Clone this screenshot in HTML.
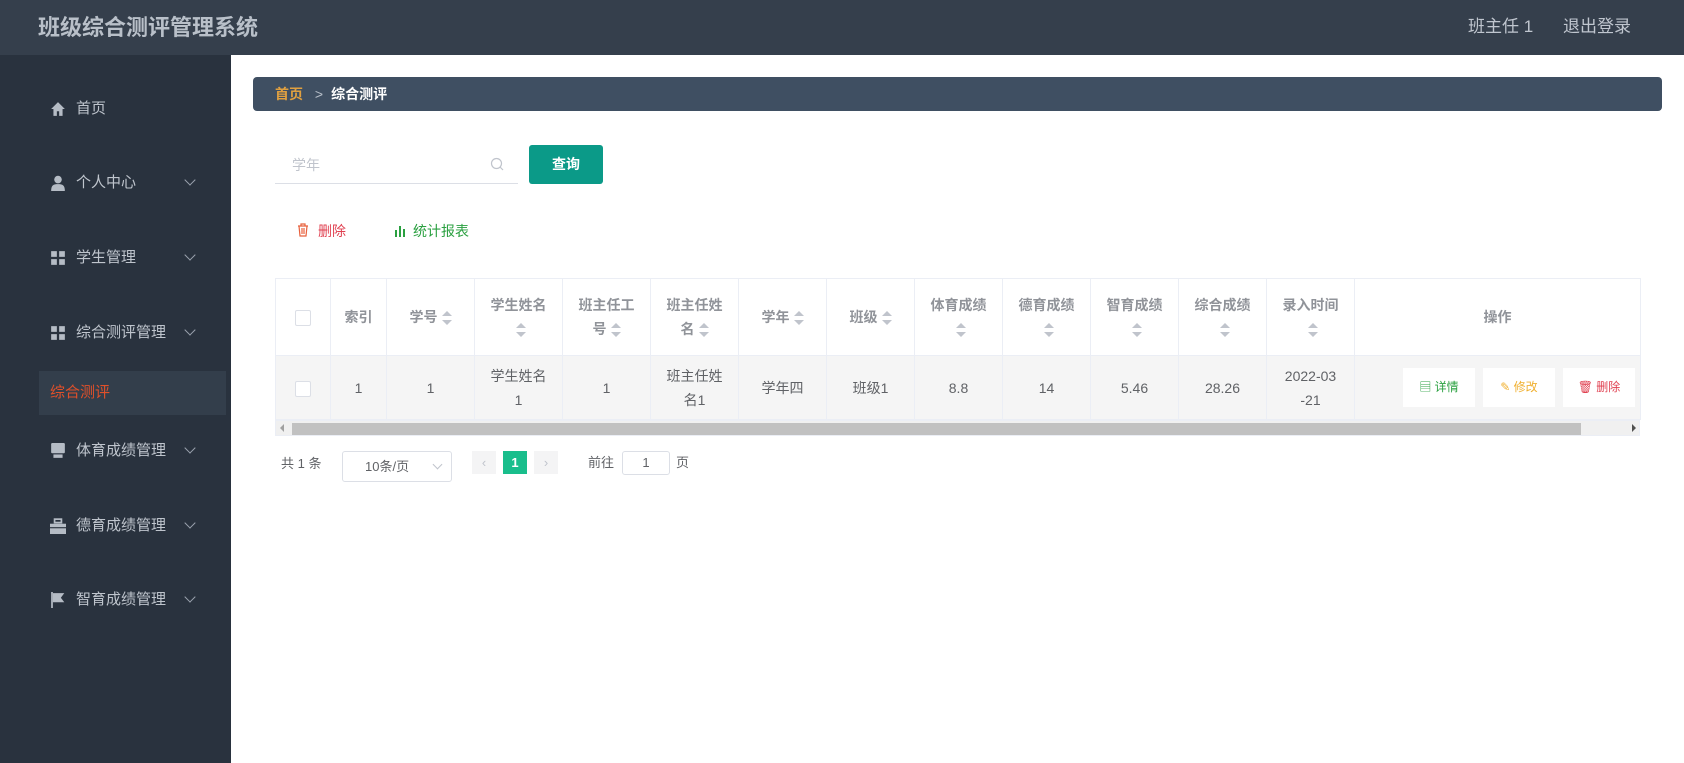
<!DOCTYPE html>
<html><head><meta charset="utf-8"><style>
*{box-sizing:border-box;margin:0;padding:0}
body{width:1684px;height:763px;overflow:hidden;background:#fff;font-family:"Liberation Sans","Noto Sans CJK SC",sans-serif;position:relative}
.a{position:absolute}
.hdr{left:0;top:0;width:1684px;height:55px;background:#353f4c}
.side{left:0;top:55px;width:231px;height:708px;background:#29323e}
.mi{position:absolute;left:0;width:231px;height:40px;color:#bfc5cd;font-size:15px;line-height:40px}
.mi .ic{position:absolute;left:50px;top:12px;width:16px;height:16px}
.mi .t{position:absolute;left:76px}
.mi .ch{position:absolute;left:186px;top:13px;width:8px;height:8px;border-right:1px solid #9aa2ad;border-bottom:1px solid #9aa2ad;transform:rotate(45deg)}
table{border-collapse:collapse;table-layout:fixed;position:absolute;left:275px;top:278px}
td,th{border:1px solid #ebeef5;text-align:center;font-size:14px;line-height:22px;padding:0 12px}
th{height:77px;color:#909399;font-weight:bold;line-height:24px}
td{height:64px;color:#606266;background:#f5f5f5;line-height:24px}
.s{display:inline-block;width:10px;height:14px;vertical-align:middle;position:relative;margin-left:4px}
.s:before{content:"";position:absolute;left:0;top:0;border:5px solid transparent;border-bottom-color:#c0c4cc;border-top:0}
.s:after{content:"";position:absolute;left:0;bottom:0;border:5px solid transparent;border-top-color:#c0c4cc;border-bottom:0}
.cb{display:inline-block;width:16px;height:16px;border:1px solid #dcdfe6;border-radius:2px;background:#fff;vertical-align:middle}
.ob{display:inline-block;width:72px;height:39px;background:#fff;line-height:39px;font-size:12px;margin-left:8px;text-align:center}
</style></head><body>
<div class="a hdr"></div>
<div class="a" style="left:38px;top:13px;font-size:22px;font-weight:bold;color:#b9c0c9;line-height:30px">班级综合测评管理系统</div>
<div class="a" style="left:1468px;top:15px;font-size:17px;color:#c0c6cf;line-height:24px">班主任 1</div>
<div class="a" style="left:1563px;top:15px;font-size:17px;color:#c0c6cf;line-height:24px">退出登录</div>
<div class="a side"></div>
<div class="mi" style="top:89px"><svg class="ic" viewBox="0 0 14 14"><path d="M7 1L1 7h2v6h3V9h2v4h3V7h2z" fill="#b5bcc5"/></svg><span class="t">首页</span></div>
<div class="mi" style="top:163px"><svg class="ic" viewBox="0 0 14 14"><circle cx="7" cy="4" r="3.3" fill="#b5bcc5"/><path d="M1 14c0-5 2-6 6-6s6 1 6 6z" fill="#b5bcc5"/></svg><span class="t">个人中心</span><i class="ch"></i></div>
<div class="mi" style="top:238px"><svg class="ic" viewBox="0 0 14 14" fill="#b5bcc5"><rect x="1" y="1" width="5" height="5"/><rect x="8" y="1" width="5" height="5"/><rect x="1" y="8" width="5" height="5"/><rect x="8" y="8" width="5" height="5"/></svg><span class="t">学生管理</span><i class="ch"></i></div>
<div class="mi" style="top:313px"><svg class="ic" viewBox="0 0 14 14" fill="#b5bcc5"><rect x="1" y="1" width="5" height="5"/><rect x="8" y="1" width="5" height="5"/><rect x="1" y="8" width="5" height="5"/><rect x="8" y="8" width="5" height="5"/></svg><span class="t">综合测评管理</span><i class="ch"></i></div>
<div class="a" style="left:39px;top:371px;width:187px;height:44px;background:#333e4b;color:#e0502a;font-size:15px;line-height:44px;padding-left:11px">综合测评</div>
<div class="mi" style="top:431px"><svg class="ic" viewBox="0 0 14 14" fill="#b5bcc5"><rect x="1" y="0" width="12" height="9" rx="1"/><rect x="3" y="10" width="8" height="3"/></svg><span class="t">体育成绩管理</span><i class="ch"></i></div>
<div class="mi" style="top:506px"><svg class="ic" viewBox="0 0 14 14" fill="#b5bcc5"><rect x="4" y="1" width="6" height="3" fill="none" stroke="#b5bcc5" stroke-width="1.5"/><rect x="0" y="5" width="14" height="3"/><rect x="0" y="9" width="14" height="5"/></svg><span class="t">德育成绩管理</span><i class="ch"></i></div>
<div class="mi" style="top:580px"><svg class="ic" viewBox="0 0 14 14" fill="#b5bcc5"><rect x="1" y="0" width="1.5" height="14"/><path d="M2.5 1h10l-3 4 3 4h-10z"/></svg><span class="t">智育成绩管理</span><i class="ch"></i></div>

<div class="a" style="left:253px;top:77px;width:1409px;height:34px;background:#3f4f62;border-radius:4px"></div>
<div class="a" style="left:275px;top:85px;font-size:14px;font-weight:bold;line-height:18px;color:#e0a040">首页 <span style="color:#b8c0ca;font-weight:normal;margin:0 8px">&gt;</span><span style="color:#fff">综合测评</span></div>

<div class="a" style="left:275px;top:145px;width:243px;height:39px;border-bottom:1px solid #dcdfe6"></div>
<div class="a" style="left:292px;top:155px;font-size:14px;color:#c0c4cc;line-height:20px">学年</div>
<svg class="a" style="left:490px;top:157px" width="15" height="15" viewBox="0 0 15 15"><circle cx="6.5" cy="6.5" r="5" fill="none" stroke="#c0c4cc" stroke-width="1.2"/><path d="M10 10l3 3" stroke="#c0c4cc" stroke-width="1.2"/></svg>
<div class="a" style="left:529px;top:145px;width:74px;height:39px;background:#0b9a88;border-radius:3px;color:#fff;font-size:14px;font-weight:bold;line-height:39px;text-align:center">查询</div>

<svg class="a" style="left:297px;top:223px" width="12" height="14" viewBox="0 0 12 14"><path d="M1 3h10M4 3V1h4v2M2 3l1 10h6l1-10M5 5v6M7 5v6" fill="none" stroke="#e8603c" stroke-width="1.2"/></svg>
<div class="a" style="left:318px;top:221px;font-size:14px;color:#e04050;line-height:20px">删除</div>
<svg class="a" style="left:394px;top:225px" width="12" height="12" viewBox="0 0 12 12" fill="#2aa040"><rect x="1" y="5" width="2" height="7"/><rect x="5" y="1" width="2" height="11"/><rect x="9" y="4" width="2" height="8"/></svg>
<div class="a" style="left:413px;top:221px;font-size:14px;color:#2aa040;line-height:20px">统计报表</div>

<table>
<colgroup><col style="width:55px"><col style="width:56px"><col style="width:88px"><col style="width:88px"><col style="width:88px"><col style="width:88px"><col style="width:88px"><col style="width:88px"><col style="width:88px"><col style="width:88px"><col style="width:88px"><col style="width:88px"><col style="width:88px"><col style="width:286px"></colgroup>
<tr><th><span class="cb"></span></th><th style="padding:0">索引</th><th>学号<i class="s"></i></th><th>学生姓名<br><i class="s"></i></th><th>班主任工<br>号<i class="s"></i></th><th>班主任姓<br>名<i class="s"></i></th><th>学年<i class="s"></i></th><th>班级<i class="s"></i></th><th>体育成绩<br><i class="s"></i></th><th>德育成绩<br><i class="s"></i></th><th>智育成绩<br><i class="s"></i></th><th>综合成绩<br><i class="s"></i></th><th>录入时间<br><i class="s"></i></th><th>操作</th></tr>
<tr><td><span class="cb"></span></td><td>1</td><td>1</td><td>学生姓名<br>1</td><td>1</td><td>班主任姓<br>名1</td><td>学年四</td><td>班级1</td><td>8.8</td><td>14</td><td>5.46</td><td>28.26</td><td>2022-03<br>-21</td><td style="text-align:right;padding-right:5px"><span class="ob" style="color:#2aa040">▤ 详情</span><span class="ob" style="color:#f0b030">✎ 修改</span><span class="ob" style="color:#e04050">🗑 删除</span></td></tr>
</table>
<div class="a" style="left:275px;top:420px;width:1365px;height:16px;background:#f0f0f0;border:1px solid #ebeef5"></div>
<div class="a" style="left:292px;top:423px;width:1289px;height:12px;background:#c1c1c1"></div>
<div class="a" style="left:280px;top:424px;border:4px solid transparent;border-right-color:#a0a0a0;border-left:0"></div>
<div class="a" style="left:1632px;top:424px;border:4px solid transparent;border-left-color:#505050;border-right:0"></div>

<div class="a" style="left:281px;top:454px;font-size:13px;color:#606266;line-height:20px">共 1 条</div>
<div class="a" style="left:342px;top:451px;width:110px;height:31px;border:1px solid #dcdfe6;border-radius:3px;font-size:13px;color:#606266;line-height:29px;padding-left:22px">10条/页</div>
<div class="a" style="left:434px;top:461px;width:7px;height:7px;border-right:1px solid #c0c4cc;border-bottom:1px solid #c0c4cc;transform:rotate(45deg)"></div>
<div class="a" style="left:472px;top:451px;width:24px;height:23px;background:#f4f4f5;color:#c0c4cc;font-size:13px;line-height:23px;text-align:center">‹</div>
<div class="a" style="left:503px;top:451px;width:24px;height:23px;background:#19be8c;color:#fff;font-size:13px;font-weight:bold;line-height:23px;text-align:center">1</div>
<div class="a" style="left:534px;top:451px;width:24px;height:23px;background:#f4f4f5;color:#c0c4cc;font-size:13px;line-height:23px;text-align:center">›</div>
<div class="a" style="left:588px;top:453px;font-size:13px;color:#606266;line-height:20px">前往</div>
<div class="a" style="left:622px;top:451px;width:48px;height:24px;border:1px solid #dcdfe6;border-radius:3px;font-size:13px;color:#606266;line-height:22px;text-align:center">1</div>
<div class="a" style="left:676px;top:453px;font-size:13px;color:#606266;line-height:20px">页</div>
</body></html>
